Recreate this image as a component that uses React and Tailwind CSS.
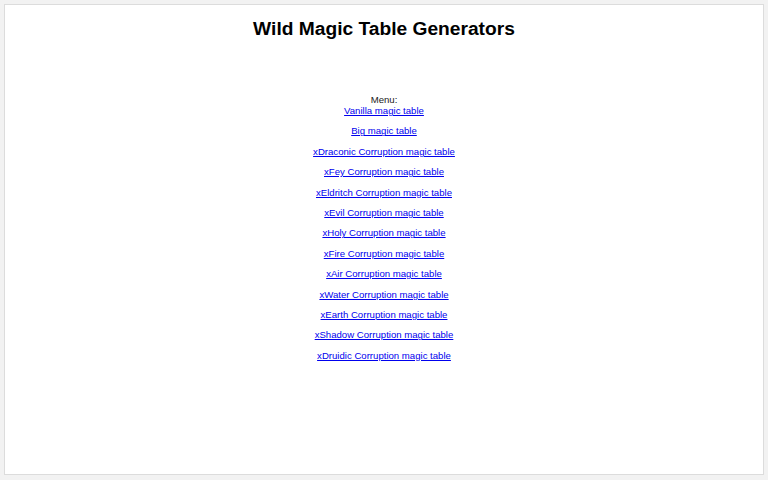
import React from 'react';

const tables = [
    'Vanilla magic table',
    'Big magic table',
    'xDraconic Corruption magic table',
    'xFey Corruption magic table',
    'xEldritch Corruption magic table',
    'xEvil Corruption magic table',
    'xHoly Corruption magic table',
    'xFire Corruption magic table',
    'xAir Corruption magic table',
    'xWater Corruption magic table',
    'xEarth Corruption magic table',
    'xShadow Corruption magic table',
    'xDruidic Corruption magic table',
];

const App = () => {
    return (
        <div className="min-h-screen bg-[#f2f2f2] p-1 font-['Liberation_Sans',Arial,sans-serif]">
            <div className="h-[471px] bg-white border border-[#dcdcdc] text-center">
                <h1 className="mt-[13px] text-[19.2px] font-bold leading-[22px] text-black">
                    Wild Magic Table Generators
                </h1>

                <div className="mt-[54px] text-[9.6px] leading-[11px] text-[#222]">
                    Menu:
                </div>
                <nav className="flex flex-col items-center gap-[9.4px]">
                    {tables.map((name) => (
                        <a
                            key={name}
                            href="#"
                            className="text-[9.6px] leading-[11px] text-[#0000ee] underline"
                        >
                            {name}
                        </a>
                    ))}
                </nav>
            </div>
        </div>
    );
};

export default App;
